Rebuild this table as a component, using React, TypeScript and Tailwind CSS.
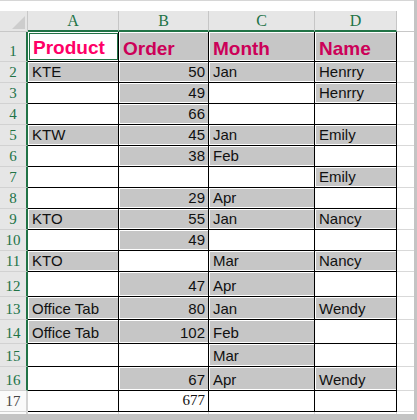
type Cell = [string, boolean];

const cols = "grid grid-cols-[28px_91px_90px_106px_82px_17px]";

const heights = [30, 21, 21, 21, 21, 21, 21, 21, 21, 21, 21, 25, 23, 24, 23, 24, 21];

const rows: Cell[][] = [
  [["Product", false], ["Order", true], ["Month", true], ["Name", true]],
  [["KTE", true], ["50", true], ["Jan", true], ["Henrry", true]],
  [["", false], ["49", true], ["", false], ["Henrry", true]],
  [["", false], ["66", true], ["", false], ["", false]],
  [["KTW", true], ["45", true], ["Jan", true], ["Emily", true]],
  [["", false], ["38", true], ["Feb", true], ["", false]],
  [["", false], ["", false], ["", false], ["Emily", true]],
  [["", false], ["29", true], ["Apr", true], ["", false]],
  [["KTO", true], ["55", true], ["Jan", true], ["Nancy", true]],
  [["", false], ["49", true], ["", false], ["", false]],
  [["KTO", true], ["", false], ["Mar", true], ["Nancy", true]],
  [["", false], ["47", true], ["Apr", true], ["", false]],
  [["Office Tab", true], ["80", true], ["Jan", true], ["Wendy", true]],
  [["Office Tab", true], ["102", true], ["Feb", true], ["", false]],
  [["", false], ["", false], ["Mar", true], ["", false]],
  [["", false], ["67", true], ["Apr", true], ["Wendy", true]],
  [["", false], ["677", false], ["", false], ["", false]],
];

function DataCell({ cell, col, row }: { cell: Cell; col: number; row: number }) {
  const [text, gray] = cell;
  const numeric = /^\d+$/.test(text);
  const header = row === 0;
  const active = row === 0 && col === 0;

  let textCls = "text-[15px] leading-[17px] text-[#111]";
  if (header) {
    textCls = `text-[19px] font-bold leading-[22px] ${col === 0 ? "text-[#ff0066]" : "text-[#cc0058]"}`;
  }
  if (row === 16 && numeric) {
    textCls = "font-['Liberation_Serif',serif] text-[15px] leading-[17px] text-[#111]";
  }

  return (
    <div className="border-r border-b border-black pt-px pb-px pl-px">
      <div
        className={`flex h-full items-end ${numeric ? "justify-end pr-[3px]" : "pl-[3px]"} ${
          gray ? "bg-[#c6c6c6]" : "bg-white"
        } ${active ? "border border-[#217346]" : ""} ${header ? "" : "pb-px"}`}
      >
        <span className={`whitespace-nowrap ${textCls}`}>{text}</span>
      </div>
    </div>
  );
}

export default function App() {
  return (
    <div className="h-[420px] w-[417px] bg-white font-['Liberation_Sans',Arial,sans-serif]">
      <div className="box-content flex h-[414px] w-[414px] flex-col overflow-hidden border-r-[3px] border-b-[6px] border-[#c4c4c4] bg-white">
        <div className="h-[11px] shrink-0 border-t border-[#d6d6d6]" />

        <div className={`${cols} h-[21px] shrink-0`}>
          <div className="relative border-r border-b border-[#c8c8c8] bg-[#e6e6e6]">
            <svg className="absolute right-[2px] bottom-[2px]" width="13" height="13" viewBox="0 0 13 13">
              <polygon points="13,0 13,13 0,13" fill="#cdcdcd" />
            </svg>
          </div>
          {["A", "B", "C", "D"].map((l) => (
            <div
              key={l}
              className="flex items-center justify-center border-r border-r-[#c6c6c6] border-b-2 border-b-[#217346] bg-[#e6e6e6] font-['Liberation_Serif',serif] text-[16px] leading-none text-[#217346]"
            >
              {l}
            </div>
          ))}
          <div className="border-b border-[#c8c8c8]" />
        </div>

        {rows.map((r, i) => (
          <div key={i} className={`${cols} shrink-0`} style={{ height: heights[i] }}>
            <div
              className={`flex items-end justify-center border-b border-b-[#d2d2d2] border-r-2 pb-[2px] font-['Liberation_Serif',serif] text-[15px] leading-none ${
                i < 16
                  ? "border-r-[#217346] bg-[#e6e6e6] text-[#217346]"
                  : "border-r-[#d4d4d4] bg-[#fafafa] text-[#444]"
              }`}
            >
              {i + 1}
            </div>
            {r.map((c, j) => (
              <DataCell key={j} cell={c} col={j} row={i} />
            ))}
            <div className="border-b border-[#d9d9d9]" />
          </div>
        ))}

        <div className={`${cols} flex-1`}>
          <div className="border-r-2 border-r-[#d4d4d4] bg-[#fafafa]" />
          <div className="border-r border-[#d9d9d9]" />
          <div className="border-r border-[#d9d9d9]" />
          <div className="border-r border-[#d9d9d9]" />
          <div className="border-r border-[#d9d9d9]" />
          <div />
        </div>
      </div>
    </div>
  );
}
